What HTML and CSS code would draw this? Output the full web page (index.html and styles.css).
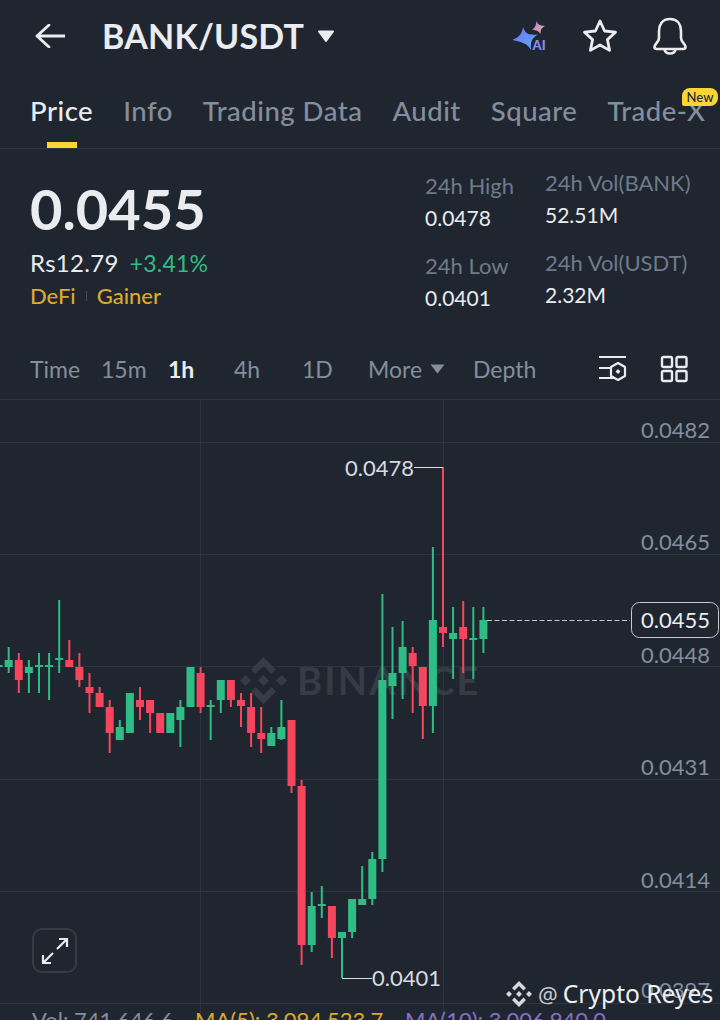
FILE: index.html
```html
<!DOCTYPE html>
<html lang="en">
<head>
    <meta charset="UTF-8">
    <meta name="viewport" content="width=device-width, initial-scale=1.0">
    <title>BANK/USDT</title>
    <link rel="stylesheet" href="styles.css">
</head>
<body>
    <div class="page">
        <!-- Header -->
        <header class="header">
            <svg class="back" width="30" height="24" viewBox="0 0 30 24">
                <path d="M14 1 L2 12 L14 23 M2 12 H30" fill="none" stroke="#eaecef" stroke-width="2.8" stroke-linecap="round" stroke-linejoin="round"/>
            </svg>
            <h1 class="pair">BANK/USDT</h1>
            <svg class="pair-caret" width="18" height="13" viewBox="0 0 18 13">
                <path d="M2 1.5 H16 L9 11 Z" fill="#eaecef" stroke="#eaecef" stroke-width="2" stroke-linejoin="round"/>
            </svg>
            <div class="header-icons">
                <svg width="36" height="32" viewBox="0 0 36 32">
                    <defs>
                        <linearGradient id="spark" x1="0" y1="0" x2="1" y2="1">
                            <stop offset="0" stop-color="#6f6cf5"/>
                            <stop offset="1" stop-color="#5fb0f7"/>
                        </linearGradient>
                        <linearGradient id="spark2" x1="0" y1="0" x2="1" y2="1">
                            <stop offset="0" stop-color="#a98be8"/>
                            <stop offset="1" stop-color="#f0a68c"/>
                        </linearGradient>
                    </defs>
                    <path d="M11 7 C13 13 16 15.500 26 14.500 C20 18 18.500 21 19 30 C15.500 24 12 22.500 0.500 20 C7 17 10 14 11 7 Z" fill="url(#spark)"/>
                    <path d="M24.500 1 C25.500 4 27 5.500 33 6 C29.500 8 28.500 9.500 28.500 14 C26.500 11 25 10.500 20 9.500 C23 8 24 5.500 24.500 1 Z" fill="url(#spark2)"/>
                    <text class="ai" x="20.500" y="30">AI</text>
                </svg>
                <svg width="36" height="36" viewBox="0 0 36 36">
                    <path d="M18 3 L22.600 13 L33.500 14.200 L25.400 21.600 L27.600 32.400 L18 27 L8.400 32.400 L10.600 21.600 L2.500 14.200 L13.400 13 Z" fill="none" stroke="#eaecef" stroke-width="2.8" stroke-linejoin="round"/>
                </svg>
                <svg width="36" height="38" viewBox="0 0 36 38">
                    <path d="M18 2 C10 2 7 8 7 14 V21 C7 25 2.500 27 2.500 30 C2.500 31.500 3.500 32 5 32 H31 C32.500 32 33.500 31.500 33.500 30 C33.500 27 29 25 29 21 V14 C29 8 26 2 18 2 Z M12.500 32.500 C13 35 15 36.500 18 36.500 C21 36.500 23 35 23.500 32.500" fill="none" stroke="#eaecef" stroke-width="2.6" stroke-linejoin="round"/>
                </svg>
            </div>
        </header>

        <!-- Tabs -->
        <nav class="tabs">
            <span class="tab active">Price</span>
            <span class="tab">Info</span>
            <span class="tab">Trading Data</span>
            <span class="tab">Audit</span>
            <span class="tab">Square</span>
            <span class="tab">Trade-X<span class="badge">New</span></span>
        </nav>

        <!-- Price summary -->
        <section class="summary">
            <div class="price-block">
                <div class="price">0.0455</div>
                <div class="price-sub"><span>Rs12.79</span><span class="up">+3.41%</span></div>
                <div class="tags"><span>DeFi</span><i class="tag-sep"></i><span>Gainer</span></div>
            </div>
            <div class="stats">
                <div class="stat-col stat-left">
                    <div class="stat"><div class="stat-label">24h High</div><div class="stat-value">0.0478</div></div>
                    <div class="stat"><div class="stat-label">24h Low</div><div class="stat-value">0.0401</div></div>
                </div>
                <div class="stat-col">
                    <div class="stat"><div class="stat-label">24h Vol(BANK)</div><div class="stat-value">52.51M</div></div>
                    <div class="stat"><div class="stat-label">24h Vol(USDT)</div><div class="stat-value">2.32M</div></div>
                </div>
            </div>
        </section>

        <!-- Chart toolbar -->
        <div class="toolbar">
            <span class="tf tf-time">Time</span>
            <span class="tf tf-15">15m</span>
            <span class="tf tf-1h">1h</span>
            <span class="tf tf-4h">4h</span>
            <span class="tf tf-1d">1D</span>
            <span class="tf tf-more">More<svg width="15" height="10" viewBox="0 0 15 10"><path d="M0.500 0.500 H14.500 L7.500 9.500 Z" fill="#848e9c"/></svg></span>
            <span class="tf">Depth</span>
            <div class="toolbar-icons">
                <svg width="30" height="28" viewBox="0 0 30 28">
                    <path d="M2 2 H29 M2 13 H17 M2 23 H17" fill="none" stroke="#eaecef" stroke-width="2.2"/>
                    <path d="M21 8 L28 12 V21 L21 25 L14 21 V12 Z" fill="#1f2630" stroke="#eaecef" stroke-width="2.2" stroke-linejoin="round"/>
                    <path d="M21 14 L23.500 16.500 L21 19 L18.500 16.500 Z" fill="#eaecef"/>
                </svg>
                <svg width="28" height="28" viewBox="0 0 28 28">
                    <g fill="none" stroke="#eaecef" stroke-width="2.4">
                        <rect x="2" y="2" width="10" height="10" rx="1.500"/>
                        <rect x="16.500" y="2" width="10" height="10" rx="1.500"/>
                        <rect x="2" y="16" width="10" height="10" rx="1.500"/>
                        <rect x="16.500" y="16" width="10" height="10" rx="1.500"/>
                    </g>
                </svg>
            </div>
        </div>

        <!-- Chart: viewBox uses page coordinates -->
        <div class="chart">
            <svg id="chart-svg" class="chart-svg" width="720" height="621" viewBox="0 399 720 621">
                <g class="grid">
                    <path d="M0 399.500 H720 M0 442.500 H720 M0 554.500 H720 M0 666.500 H720 M0 779.500 H720 M0 891.500 H720 M0 1003.500 H720 M200.500 399 V1020 M443.500 399 V1020"/>
                </g>
                <g class="watermark">
                    <path d="M263.500 657 L276 669.500 L271.500 674 L263.500 666 L255.500 674 L251 669.500 Z M240 680.500 L245.500 675 L251 680.500 L245.500 686 Z M276 680.500 L281.500 675 L287 680.500 L281.500 686 Z M263.500 675 L269 680.500 L263.500 686 L258 680.500 Z M251 691.500 L255.500 687 L263.500 695 L271.500 687 L276 691.500 L263.500 704 Z"/>
                    <text class="wm-text" x="297" y="695">BINANCE</text>
                </g>
                <g id="candles"></g>
                <g class="axis">
                    <text x="641" y="438">0.0482</text>
                    <text x="641" y="550">0.0465</text>
                    <text x="641" y="663">0.0448</text>
                    <text x="641" y="775">0.0431</text>
                    <text x="641" y="888">0.0414</text>
                    <text x="641" y="998">0.0397</text>
                </g>
                <path class="last-line" d="M487 620.500 H630"/>
                <rect class="last-box" x="631.500" y="602.500" width="87" height="35" rx="8"/>
                <text class="last-text" x="641" y="628">0.0455</text>
                <path class="mark-line" d="M414 467.500 H443 M342 978.500 H372"/>
                <text class="mark-text" x="345" y="476">0.0478</text>
                <text class="mark-text" x="372" y="986">0.0401</text>
            </svg>

            <button class="expand" type="button">
                <svg width="30" height="30" viewBox="0 0 30 30">
                    <path d="M3 27 L13 17 M3 19 V27 H11 M17 13 L27 3 M19 3 H27 V11" fill="none" stroke="#eaecef" stroke-width="2.2"/>
                </svg>
            </button>

            <div class="legend">
                <span class="legend-vol">Vol: 741,646.6</span>
                <span class="legend-ma5">MA(5): 3,094,523.7</span>
                <span class="legend-ma10">MA(10): 3,006,940.0</span>
            </div>

            <div class="credit">
                <svg width="28" height="28" viewBox="0 0 28 28">
                    <path d="M14 1 L21 8 L18.500 10.500 L14 6 L9.500 10.500 L7 8 Z M1 14 L4 11 L7 14 L4 17 Z M21 14 L24 11 L27 14 L24 17 Z M14 11 L17 14 L14 17 L11 14 Z M7 20 L9.500 17.500 L14 22 L18.500 17.500 L21 20 L14 27 Z" fill="#d5d8dc"/>
                </svg>
                <span class="credit-at">@</span>
                <span class="credit-name">Crypto Reyes</span>
            </div>
        </div>
    </div>
    <script src="chart.js"></script>
</body>
</html>
```

FILE: styles.css
```css
* {
    box-sizing: border-box;
}
body {
    font-family: 'Lato', 'Liberation Sans', sans-serif;
    margin: 0;
    padding: 0;
    background-color: #1f2630;
    color: #eaecef;
}
.page {
    width: 720px;
    height: 1020px;
    overflow: hidden;
}
.header {
    display: flex;
    align-items: center;
    height: 72px;
    padding-left: 35px;
}
.back {
    margin-right: 37px;
}
.pair {
    margin: 0 13px 0 0;
    font-size: 34px;
    font-weight: 700;
    letter-spacing: 0.2px;
    line-height: 72px;
    color: #eaecef;
}
.header-icons {
    display: flex;
    align-items: center;
    gap: 34px;
    margin-left: auto;
    padding-right: 32px;
}
.ai {
    font-size: 13px;
    font-weight: 900;
    fill: #8a8cf0;
}
.tabs {
    display: flex;
    gap: 30px;
    height: 77px;
    padding: 20px 0 0 30px;
    border-bottom: 1px solid #2f3640;
    font-size: 27.5px;
    font-weight: 500;
    letter-spacing: 0.5px;
    line-height: 38px;
    color: #848e9c;
    white-space: nowrap;
}
.tab {
    position: relative;
}
.tab.active {
    color: #eaecef;
}
.tab.active::after {
    content: '';
    position: absolute;
    left: 17px;
    bottom: 0;
    width: 30px;
    height: 6px;
    background-color: #fcd535;
}
.badge {
    position: absolute;
    right: -13px;
    top: -4px;
    padding: 0 5px;
    height: 18px;
    border-radius: 8px 8px 8px 2px;
    background-color: #fcd535;
    color: #1f2630;
    font-size: 13px;
    letter-spacing: 0;
    line-height: 18px;
}
.summary {
    display: flex;
    justify-content: space-between;
    height: 190px;
    padding: 18px 0 0 30px;
}
.price-block {
    padding-top: 4px;
}
.price {
    font-size: 56px;
    font-weight: 700;
    line-height: 76px;
    color: #eaecef;
}
.price-sub {
    display: flex;
    gap: 11px;
    font-size: 24px;
    letter-spacing: 0.3px;
    line-height: 32px;
}
.up {
    font-size: 23px;
    letter-spacing: 0.2px;
    color: #2ebd85;
}
.tags {
    display: flex;
    align-items: center;
    gap: 10px;
    margin-top: 2px;
    font-size: 22px;
    font-weight: 500;
    line-height: 30px;
    color: #dcaa2d;
}
.tag-sep {
    width: 1px;
    height: 10px;
    background-color: #474d57;
}
.stats {
    display: flex;
    gap: 32px;
    padding-right: 30px;
}
.stat-col {
    width: 145px;
}
.stat-left {
    width: 88px;
    padding-top: 3px;
}
.stat {
    height: 80px;
    white-space: nowrap;
}
.stat-label {
    font-size: 22px;
    line-height: 32px;
    color: #707a8a;
}
.stat-value {
    font-size: 21px;
    line-height: 32px;
    color: #eaecef;
}
.toolbar {
    display: flex;
    align-items: center;
    height: 60px;
    padding: 0 0 0 30px;
    font-size: 23px;
    color: #848e9c;
}
.tf {
    display: inline-flex;
    align-items: center;
}
.tf-time { width: 71px; }
.tf-15 { width: 67px; }
.tf-1h { width: 66px; color: #eaecef; font-weight: 700; }
.tf-4h { width: 68px; }
.tf-1d { width: 66px; }
.tf-more { width: 105px; gap: 8px; }
.toolbar-icons {
    display: flex;
    align-items: center;
    gap: 33px;
    margin-left: auto;
    padding-right: 32px;
}
.chart {
    position: relative;
    height: 621px;
}
.chart-svg {
    display: block;
}
.grid path {
    fill: none;
    stroke: #2d343e;
    stroke-width: 1;
}
.watermark {
    fill: #363c46;
}
.wm-text {
    font-size: 38px;
    font-weight: 700;
    letter-spacing: 2.2px;
}
.axis text {
    font-size: 22px;
    fill: #848e9c;
}
.last-line {
    fill: none;
    stroke: #c5c9cf;
    stroke-width: 1;
    stroke-dasharray: 5 2.5;
}
.last-box {
    fill: #1f2630;
    stroke: #c5c9cf;
    stroke-width: 1;
}
.last-text {
    font-size: 22px;
    fill: #eaecef;
}
.mark-line {
    fill: none;
    stroke: #d8dbe0;
    stroke-width: 1;
}
.mark-text {
    font-size: 22px;
    fill: #d8dbe0;
}
.expand {
    position: absolute;
    left: 32px;
    top: 529px;
    display: flex;
    align-items: center;
    justify-content: center;
    width: 45px;
    height: 45px;
    padding: 0;
    border: 2px solid #363c46;
    border-radius: 10px;
    background: none;
}
.legend {
    position: absolute;
    left: 32px;
    top: 606px;
    display: flex;
    font-size: 22px;
    line-height: 30px;
    white-space: nowrap;
}
.legend-vol {
    width: 163px;
    color: #848e9c;
}
.legend-ma5 {
    width: 210px;
    color: #dcaa2d;
}
.legend-ma10 {
    color: #8a6fc9;
}
.credit {
    position: absolute;
    left: 505px;
    top: 578px;
    display: flex;
    align-items: center;
    gap: 5px;
    white-space: nowrap;
}
.credit-at {
    font-family: 'Noto Sans', sans-serif;
    font-size: 22px;
    color: #c5c9cf;
}
.credit-name {
    font-family: 'Noto Sans', sans-serif;
    font-size: 24.6px;
    color: #eef0f2;
}
```

FILE: chart.js
```js
// up flag, wick top, body top, body bottom, wick bottom (page y)
const UP = '#2ebd85';
const DOWN = '#f6465d';
const candles = [
    [1, 665, 665, 667, 667], [1, 647, 660, 667, 673], [0, 653, 660, 680, 693], [1, 660, 667, 673, 693],
    [1, 653, 665, 667, 693], [1, 653, 665, 667, 700], [1, 600, 658, 660, 673], [0, 640, 660, 667, 667],
    [0, 653, 667, 680, 687], [0, 673, 687, 693, 713], [0, 687, 693, 707, 707], [0, 700, 707, 733, 753],
    [1, 720, 727, 740, 740], [1, 693, 693, 733, 733], [0, 687, 700, 707, 720], [0, 700, 700, 713, 733],
    [0, 713, 713, 733, 733], [1, 713, 713, 733, 733], [1, 700, 707, 720, 747], [1, 667, 667, 707, 707],
    [0, 667, 673, 707, 713], [1, 700, 705, 707, 740], [1, 680, 680, 700, 713], [0, 680, 680, 700, 707],
    [0, 693, 700, 706, 727], [0, 693, 707, 733, 747], [0, 707, 733, 739, 753], [1, 727, 733, 746, 746],
    [1, 700, 727, 739, 740], [0, 720, 720, 786, 793], [0, 780, 786, 945, 965], [1, 892, 906, 945, 952],
    [1, 886, 904, 906, 918], [0, 906, 906, 938, 958], [1, 932, 932, 938, 978], [1, 899, 899, 932, 938],
    [1, 866, 899, 905, 905], [1, 852, 859, 899, 905], [1, 594, 680, 859, 872], [1, 627, 673, 686, 719],
    [1, 621, 647, 673, 699], [0, 647, 653, 666, 713], [0, 667, 667, 706, 739], [1, 547, 620, 706, 733],
    [0, 467, 627, 633, 647], [1, 607, 633, 639, 679], [0, 601, 627, 639, 673], [1, 607, 638, 640, 679],
    [1, 607, 620, 639, 653]
];

const group = document.getElementById('candles');
const SVG_NS = 'http://www.w3.org/2000/svg';

function addRect(x, y, w, h, color) {
    const rect = document.createElementNS(SVG_NS, 'rect');
    rect.setAttribute('x', x);
    rect.setAttribute('y', y);
    rect.setAttribute('width', w);
    rect.setAttribute('height', h);
    rect.setAttribute('fill', color);
    group.appendChild(rect);
}

candles.forEach((c, i) => {
    const cx = 10.1 * i - 1.4;
    const color = c[0] ? UP : DOWN;
    addRect(cx - 1, c[1], 2, c[4] - c[1], color);
    addRect(cx - 4, c[2], 8, Math.max(c[3] - c[2], 2), color);
});
```
